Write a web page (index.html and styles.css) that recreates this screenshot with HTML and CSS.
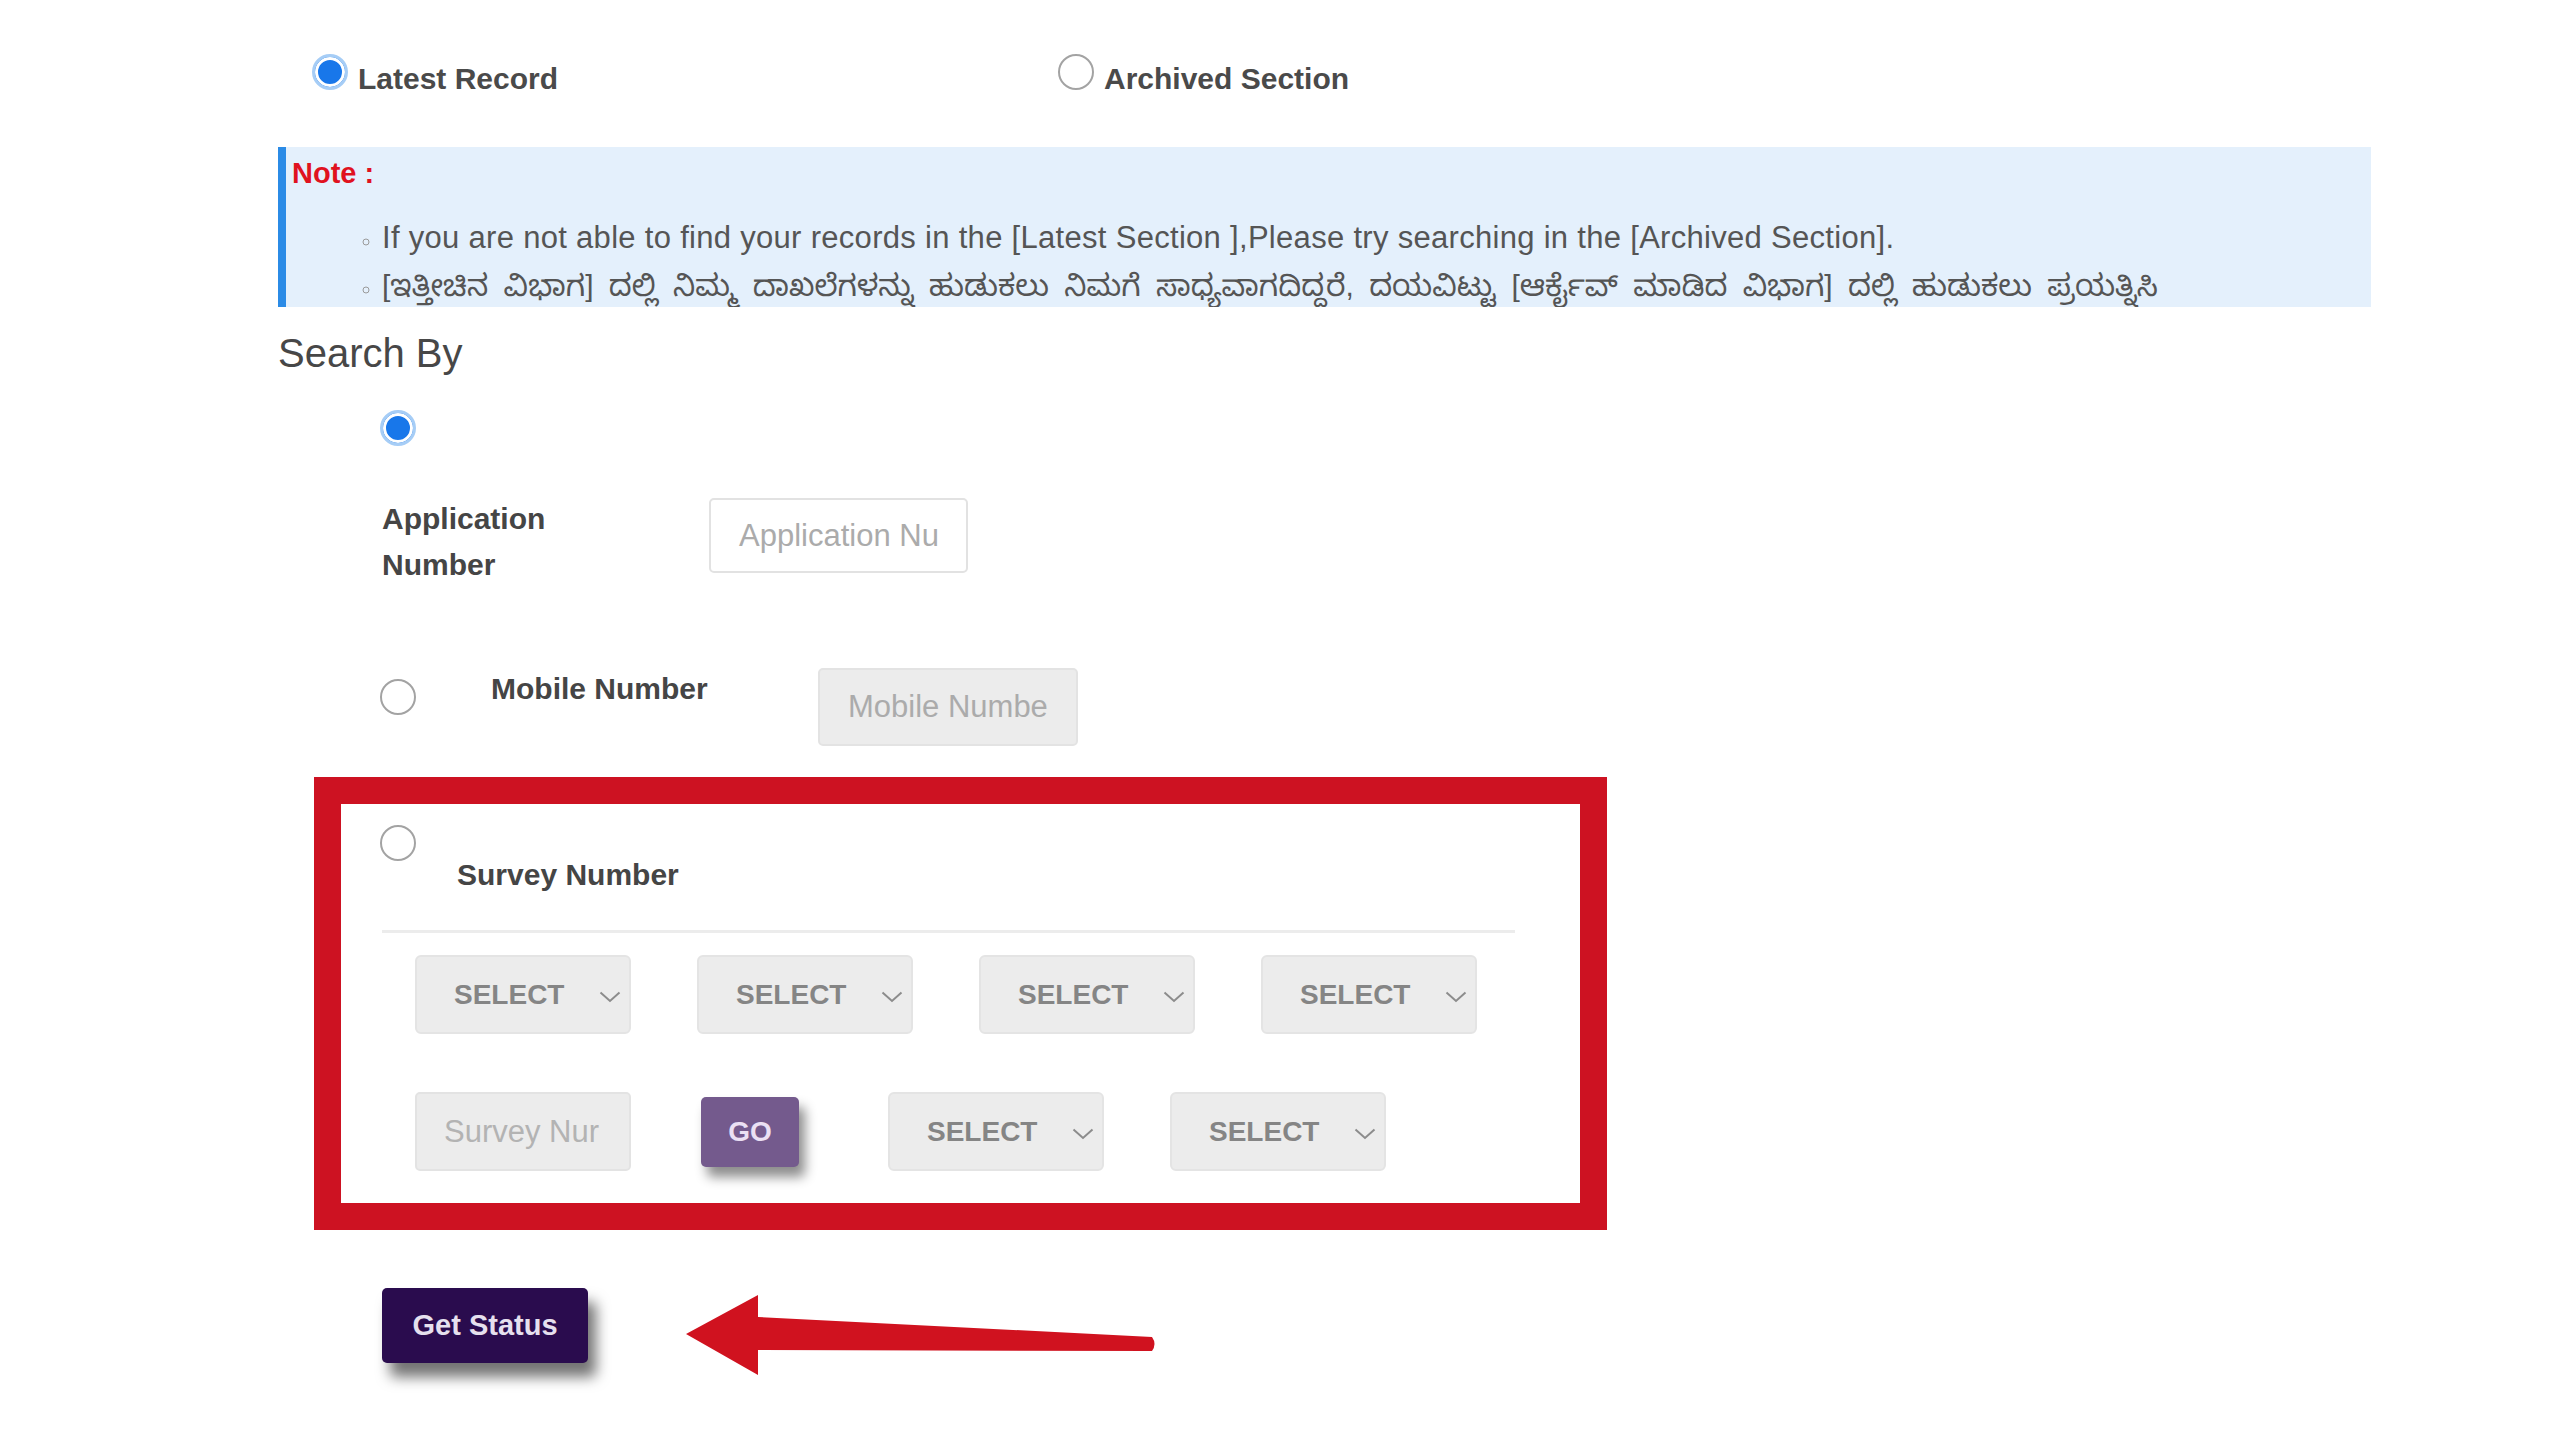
FILE: index.html
```html
<!DOCTYPE html>
<html lang="en">
<head>
<meta charset="utf-8">
<title>Search Status</title>
<link rel="stylesheet" href="styles.css">
</head>
<body>
<div class="page">
  <div class="record-row">
    <label class="opt opt-latest"><span class="radio checked"></span><span class="opt-text">Latest Record</span></label>
    <label class="opt opt-archived"><span class="radio"></span><span class="opt-text">Archived Section</span></label>
  </div>

  <div class="note">
    <div class="note-title">Note :</div>
    <ul class="note-list">
      <li>If you are not able to find your records in the [Latest Section ],Please try searching in the [Archived Section].</li>
      <li class="kn" lang="kn">[ಇತ್ತೀಚಿನ ವಿಭಾಗ] ದಲ್ಲಿ ನಿಮ್ಮ ದಾಖಲೆಗಳನ್ನು ಹುಡುಕಲು ನಿಮಗೆ ಸಾಧ್ಯವಾಗದಿದ್ದರೆ, ದಯವಿಟ್ಟು [ಆರ್ಕೈವ್ ಮಾಡಿದ ವಿಭಾಗ] ದಲ್ಲಿ ಹುಡುಕಲು ಪ್ರಯತ್ನಿಸಿ</li>
    </ul>
  </div>

  <h2 class="search-title">Search By</h2>

  <div class="search-radio"><span class="radio checked"></span></div>

  <div class="app-row">
    <div class="field-label app-label">Application<br>Number</div>
    <div class="input input-white">Application Nu</div>
  </div>

  <div class="mobile-row">
    <span class="radio mobile-radio"></span>
    <div class="field-label mobile-label">Mobile Number</div>
    <div class="input input-grey mobile-input">Mobile Numbe</div>
  </div>

  <div class="survey-box">
    <div class="survey-head">
      <span class="radio"></span>
      <div class="field-label survey-label">Survey Number</div>
    </div>
    <div class="survey-rule"></div>
    <div class="select-row">
      <div class="select">SELECT<svg class="chev" viewBox="0 0 22 12"><path d="M1.5 1.5 L11 10 L20.5 1.5" /></svg></div>
      <div class="select">SELECT<svg class="chev" viewBox="0 0 22 12"><path d="M1.5 1.5 L11 10 L20.5 1.5" /></svg></div>
      <div class="select">SELECT<svg class="chev" viewBox="0 0 22 12"><path d="M1.5 1.5 L11 10 L20.5 1.5" /></svg></div>
      <div class="select">SELECT<svg class="chev" viewBox="0 0 22 12"><path d="M1.5 1.5 L11 10 L20.5 1.5" /></svg></div>
    </div>
    <div class="select-row row-two">
      <div class="input input-grey survey-input">Survey Nur</div>
      <button class="go-btn">GO</button>
      <div class="select">SELECT<svg class="chev" viewBox="0 0 22 12"><path d="M1.5 1.5 L11 10 L20.5 1.5" /></svg></div>
      <div class="select">SELECT<svg class="chev" viewBox="0 0 22 12"><path d="M1.5 1.5 L11 10 L20.5 1.5" /></svg></div>
    </div>
  </div>

  <div class="status-row">
    <button class="status-btn">Get Status</button>
    <svg class="arrow" viewBox="0 0 472 84" width="472" height="84">
      <path d="M0 41 L72 2 L72 24 L466 44 Q471 51 466 58 L72 57 L72 82 Z" fill="#d0121f"/>
    </svg>
  </div>
</div>
</body>
</html>
```

FILE: styles.css
```css
html, body {
  margin: 0;
  padding: 0;
  background: #ffffff;
}

body {
  font-family: "Liberation Sans", Arial, "Noto Sans Kannada", "Noto Sans", sans-serif;
  color: #444444;
  width: 2560px;
  height: 1440px;
  overflow: hidden;
}

.page {
  padding-left: 278px;
  width: 2093px;
}

/* radios */
.radio {
  display: inline-block;
  box-sizing: border-box;
  width: 36px;
  height: 36px;
  border-radius: 50%;
  border: 2px solid #a3a3a3;
  background: #ffffff;
  flex: none;
}

.radio.checked {
  border: 3px solid #a6cdf6;
  background: #1877ea;
  box-shadow: inset 0 0 0 3px #ffffff;
}

/* top record choice */
.record-row {
  display: flex;
  align-items: flex-start;
  height: 147px;
  box-sizing: border-box;
  padding-top: 54px;
}

.opt {
  display: flex;
  align-items: flex-start;
}

.opt-latest {
  margin-left: 34px;
  width: 746px;
}

.opt-text {
  font-size: 30px;
  font-weight: 700;
  color: #4a4a4a;
  line-height: 36px;
  margin-top: 7px;
  margin-left: 10px;
}

/* note */
.note {
  box-sizing: border-box;
  height: 160px;
  overflow: hidden;
  background: #e4f0fc;
  border-left: 8px solid #2b8be6;
  padding: 9px 0 0 6px;
}

.note-title {
  color: #e0121f;
  font-weight: 700;
  font-size: 29px;
  line-height: 34px;
}

.note-list {
  margin: 24px 0 0 0;
  padding: 0 0 0 90px;
  list-style: circle;
  color: #555555;
  font-size: 31px;
  letter-spacing: 0.3px;
  line-height: 48px;
}

.note-list li::marker {
  color: #9a9a9a;
  font-size: 20px;
}

.note-list .kn {
  font-size: 30px;
  letter-spacing: 0;
  word-spacing: 7px;
  line-height: 48px;
}

/* search by */
.search-title {
  margin: 24px 0 0 0;
  font-size: 40px;
  font-weight: 400;
  line-height: 45px;
  color: #474747;
}

.search-radio {
  margin: 34px 0 0 102px;
  height: 36px;
}

.search-radio .radio {
  display: block;
}

.field-label {
  font-size: 30px;
  font-weight: 700;
  line-height: 46px;
  color: #454545;
}

.app-row {
  display: flex;
  align-items: flex-start;
  margin: 50px 0 0 104px;
}

.app-label {
  width: 327px;
  flex: none;
}

.input {
  box-sizing: border-box;
  border-radius: 5px;
  font-size: 31px;
  color: #ababab;
  overflow: hidden;
  white-space: nowrap;
  display: flex;
  align-items: center;
}

.input-white {
  width: 259px;
  height: 75px;
  margin-top: 2px;
  background: #ffffff;
  border: 2px solid #e2e2e2;
  padding-left: 28px;
}

.input-grey {
  background: #ececec;
  border: 2px solid #e3e3e3;
}

.mobile-row {
  display: flex;
  align-items: flex-start;
  margin: 78px 0 0 102px;
}

.mobile-radio {
  margin-top: 13px;
}

.mobile-label {
  margin-left: 75px;
  width: 327px;
  flex: none;
}

.mobile-input {
  margin-top: 2px;
  width: 260px;
  height: 78px;
  padding-left: 28px;
}

/* survey box */
.survey-box {
  box-sizing: border-box;
  margin: 31px 0 0 36px;
  width: 1293px;
  height: 453px;
  border: 27px solid #cd1222;
  padding: 21px 0 0 39px;
}

.survey-head {
  display: flex;
  align-items: flex-start;
  height: 73px;
}

.survey-label {
  margin-left: 41px;
  margin-top: 27px;
}

.survey-rule {
  margin: 32px 0 0 2px;
  width: 1133px;
  height: 3px;
  background: #ececec;
}

.select-row {
  display: flex;
  align-items: center;
  margin: 22px 0 0 35px;
  gap: 66px;
  height: 79px;
}

.row-two {
  margin-top: 58px;
  gap: 0;
}

.select {
  box-sizing: border-box;
  width: 216px;
  height: 79px;
  background: #ececec;
  border: 2px solid #e4e4e4;
  border-radius: 6px;
  display: flex;
  align-items: center;
  padding-left: 37px;
  font-size: 28px;
  font-weight: 700;
  color: #858585;
  flex: none;
}

.chev {
  width: 22px;
  height: 12px;
  margin-left: 35px;
  margin-top: 4px;
  fill: none;
  stroke: #8c8c8c;
  stroke-width: 2;
}

.survey-input {
  width: 216px;
  height: 79px;
  padding-left: 27px;
  color: #b3b3b3;
  flex: none;
}

.go-btn {
  margin-left: 70px;
  width: 98px;
  height: 70px;
  border: none;
  border-radius: 5px;
  background: #745a8d;
  color: #ebe0f4;
  font-family: "Liberation Sans", Arial, sans-serif;
  font-size: 28px;
  font-weight: 700;
  box-shadow: 6px 10px 12px rgba(0, 0, 0, 0.45);
  padding: 0;
  flex: none;
}

.row-two .go-btn + .select {
  margin-left: 89px;
}

.row-two .select + .select {
  margin-left: 66px;
}

/* status */
.status-row {
  display: flex;
  align-items: flex-start;
  margin: 58px 0 0 104px;
}

.status-btn {
  width: 206px;
  height: 75px;
  border: none;
  border-radius: 5px;
  background: #2a0c4e;
  color: #e6e0ee;
  font-family: "Liberation Sans", Arial, sans-serif;
  font-size: 29px;
  font-weight: 700;
  box-shadow: 8px 14px 14px rgba(0, 0, 0, 0.55);
  padding: 0;
  flex: none;
}

.arrow {
  display: block;
  margin-left: 98px;
  margin-top: 5px;
  flex: none;
}
```
